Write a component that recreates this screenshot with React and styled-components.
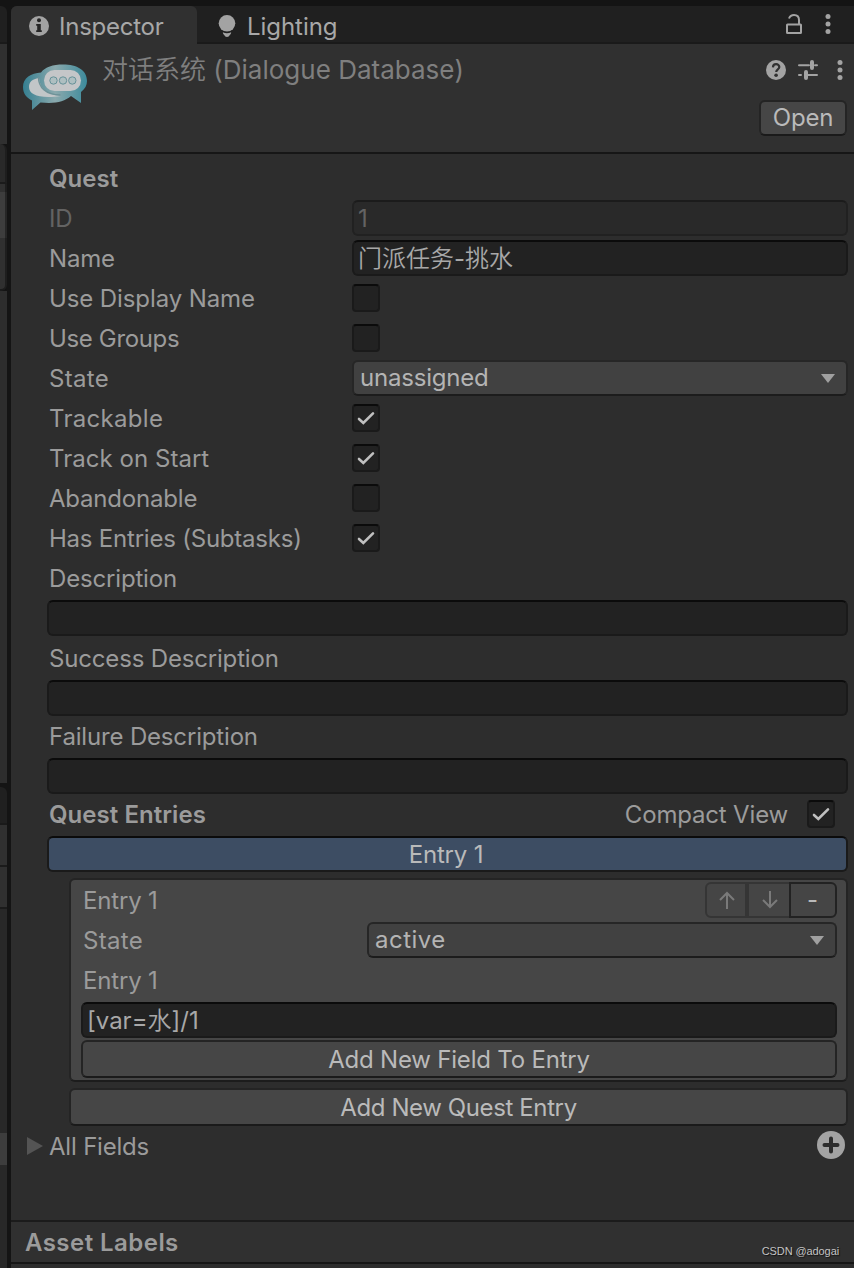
import React from "react";
import styled, { createGlobalStyle, css } from "styled-components";

const GlobalStyle = createGlobalStyle`
  * {
    box-sizing: border-box;
  }
  body {
    margin: 0;
    background: #141414;
    color: #9b9b9b;
    font-family: Inter, "Noto Sans CJK SC", sans-serif;
    font-size: 24px;
    line-height: 36px;
    letter-spacing: -0.2px;
  }
  svg {
    display: block;
    flex: none;
  }
`;

const Window = styled.div`
  display: flex;
  gap: 4px;
  width: 854px;
  height: 1268px;
  padding-top: 6px;
  overflow: hidden;
  white-space: nowrap;
`;

/* Sliver of the neighbouring docked windows */
const Neighbour = styled.div`
  width: 7px;
  flex: none;
  display: flex;
  flex-direction: column;
`;

const Slice = styled.div`
  height: ${(p) => p.$h}px;
  flex: none;
  background: ${(p) => p.$bg};
  ${(p) => p.$line && `border-bottom: 2px solid ${p.$line};`}
  ${(p) => p.$round && `border-radius: ${p.$round};`}
  ${(p) => p.$edge && `border-right: 2px solid ${p.$edge};`}
`;

const Inspector = styled.main`
  flex: 1;
  min-width: 0;
  display: flex;
  flex-direction: column;
  border-radius: 6px 0 0 0;
  background: #2d2d2d;
`;

const TabBar = styled.nav`
  display: flex;
  height: 38px;
  flex: none;
  border-radius: 6px 0 0 0;
  background: #202020;
  box-shadow: inset 0 -2px #1a1a1a;
`;

const Tab = styled.div`
  display: flex;
  align-items: center;
  height: 38px;
  color: #a8a8a8;
  padding: 2px 0 0 ${(p) => (p.$active ? 18 : 21)}px;
  gap: ${(p) => (p.$active ? 10 : 11)}px;
  letter-spacing: ${(p) => (p.$active ? -0.25 : -0.05)}px;
  ${(p) =>
    p.$active &&
    css`
      width: 186px;
      border-radius: 6px 6px 0 0;
      background: #303030;
    `}
`;

const TabLabel = styled.span`
  padding-top: 2px;
`;

const TabTools = styled.div`
  display: flex;
  align-items: center;
  gap: 22px;
  margin-left: auto;
  padding: 0 23px 2px 0;
`;

const Header = styled.header`
  display: flex;
  height: 110px;
  flex: none;
  padding: 8px 0 0 12px;
  background: #303030;
  border-bottom: 2px solid #161616;
`;

const Logo = styled.div`
  padding-top: 12px;
`;

const Title = styled.h1`
  margin: 0 0 0 13px;
  font-size: 26px;
  font-weight: 400;
  letter-spacing: 0;
  color: #7f7f7f;
`;

const Han = styled.span`
  font-weight: 350;
`;

const HeaderSide = styled.div`
  display: flex;
  flex-direction: column;
  align-items: flex-end;
  gap: 12px;
  margin-left: auto;
`;

const HeaderTools = styled.div`
  display: flex;
  align-items: center;
  gap: 12px;
  height: 36px;
  padding-right: 11px;

  > :last-child {
    margin-left: 7px;
  }
`;

const Button = styled.button`
  display: block;
  width: ${(p) => p.$w || "100%"};
  height: ${(p) => p.$h || 38}px;
  margin: ${(p) => p.$m || 0};
  padding: ${(p) => (p.$h ? 0 : "1px 0 0")};
  border: 2px solid #242424;
  border-bottom-color: #1a1a1a;
  border-radius: 6px;
  background: #464646;
  color: #bababa;
  font: inherit;
  line-height: 32px;
  letter-spacing: ${(p) => p.$track || -0.2}px;
`;

const Body = styled.section`
  height: 1066px;
  flex: none;
  padding: 6px 6px 0 36px;
`;

const Row = styled.div`
  display: flex;
  align-items: center;
  height: 36px;
  margin-bottom: ${(p) => (p.$gap === undefined ? 4 : p.$gap)}px;
`;

const Label = styled.label`
  width: ${(p) => p.$w || 305}px;
  flex: none;
  padding-left: 2px;
  padding-top: 1px;
  color: ${(p) => (p.$dim ? "#636363" : "inherit")};
  letter-spacing: ${(p) => (p.$track === undefined ? -0.17 : p.$track)}px;
`;

const Strong = styled.h2`
  margin: 0;
  padding: 1px 0 0 2px;
  font-size: 24px;
  font-weight: 600;
  letter-spacing: ${(p) => p.$track || 0.05}px;
`;

const Field = styled.div`
  flex: 1;
  height: 36px;
  padding: 0 4px;
  line-height: 34px;
  letter-spacing: 0;
  border: 2px solid ${(p) => (p.$dim ? "#212121" : "#1a1a1a")};
  border-top-color: ${(p) => (p.$dim ? "#1b1b1b" : "#0b0b0b")};
  border-radius: 6px;
  background: ${(p) => (p.$dim ? "#292929" : "#222222")};
  color: ${(p) => (p.$dim ? "#636363" : "#a8a8a8")};
`;

const Dropdown = styled.div`
  flex: 1;
  display: flex;
  align-items: center;
  justify-content: space-between;
  height: 36px;
  padding: 0 11px 0 6px;
  border: 2px solid #262626;
  border-bottom-color: #1c1c1c;
  border-radius: 6px;
  background: #414141;
  color: #b4b4b4;
  line-height: 32px;
  letter-spacing: ${(p) => p.$track}px;
`;

const Box = styled.span`
  display: flex;
  align-items: center;
  justify-content: center;
  width: 28px;
  height: 28px;
  border: 2px solid #1a1a1a;
  border-top-color: #0b0b0b;
  border-radius: 4px;
  background: #222222;
`;

const Compact = styled.div`
  display: flex;
  align-items: center;
  margin-left: auto;
  padding-right: 13px;

  ${Label} {
    width: auto;
    padding-right: 19px;
  }
`;

const EntryTab = styled.div`
  height: 36px;
  padding-right: 3px;
  border: 2px solid #1a1a1a;
  border-top-color: #0b0b0b;
  border-radius: 6px;
  background: #3d4d63;
  color: #bababa;
  line-height: 34px;
  text-align: center;
`;

const EntryPanel = styled.div`
  height: 204px;
  margin: 6px 0 6px 22px;
  padding: 2px 9px 0 10px;
  border: 2px solid #242424;
  border-bottom-color: #1c1c1c;
  border-radius: 6px;
  background: #464646;
`;

const MoveGroup = styled.div`
  display: flex;
  margin-left: auto;
  height: 36px;
`;

const MoveButton = styled.button`
  display: flex;
  align-items: center;
  justify-content: center;
  width: ${(p) => p.$w}px;
  height: 36px;
  padding: 0 0 0 2px;
  border: 2px solid #353535;
  border-right-width: ${(p) => (p.$first ? 2 : 0)}px;
  border-radius: ${(p) => (p.$first ? "6px 0 0 6px" : "0")};
  background: #454545;
  color: #7a7a7a;
  font: inherit;
  ${(p) =>
    p.$last &&
    css`
      padding: 0 1px 0 0;
      border: 2px solid #222222;
      border-radius: 0 6px 6px 0;
      color: #bababa;
    `}
`;

const Foldout = styled.div`
  display: flex;
  align-items: center;
  height: 40px;
  margin: -1px 0 0 -20px;
  padding-right: 3px;

  > :last-child {
    margin-left: auto;
  }
`;

const FoldoutLabel = styled.span`
  padding: 3px 0 0 6px;
`;

const Footer = styled.footer`
  height: 44px;
  flex: none;
  display: flex;
  align-items: center;
  justify-content: space-between;
  padding: 0 15px 0 12px;
  background: #303030;
  border-top: 2px solid #1b1b1b;
  border-bottom: 2px solid #161616;
`;

const Watermark = styled.small`
  padding-top: 17px;
  font: 11px/16px "Liberation Sans", sans-serif;
  letter-spacing: -0.1px;
  color: #c4c4c4;
  text-shadow: 1px 1px 1px #111;
`;

const InfoIcon = () => (
  <svg width="20" height="20" viewBox="0 0 20 20">
    <circle cx="10" cy="10" r="10" fill="#a3a3a3" />
    <circle cx="10" cy="4.3" r="2" fill="#262626" />
    <path d="M7.2 8h4.6v6.2h1V16H7.2v-1.8h1V9.8h-1z" fill="#262626" />
  </svg>
);

const BulbIcon = () => (
  <svg width="18" height="24" viewBox="0 0 18 24">
    <circle cx="9" cy="9.3" r="8.3" fill="#a3a3a3" />
    <path
      d="M4.8 18.3Q9 20 13.2 18.3Q13 20.6 11.8 21Q11 23 9 23Q7 23 6.2 21Q5 20.6 4.8 18.3Z"
      fill="#a3a3a3"
    />
  </svg>
);

const LockIcon = () => (
  <svg width="18" height="22" viewBox="0 0 18 22" fill="none" stroke="#a3a3a3" strokeWidth="2">
    <rect x="2" y="11.5" width="14" height="8.5" rx="0.5" />
    <path d="M4 5.5C5 3 6.5 2 9 2c3 0 5 2 5 5v4.5" />
  </svg>
);

const DotsIcon = () => (
  <svg width="6" height="20" viewBox="0 0 6 20" fill="#a3a3a3">
    <circle cx="3" cy="2.5" r="2.5" />
    <circle cx="3" cy="10" r="2.5" />
    <circle cx="3" cy="17.5" r="2.5" />
  </svg>
);

const HelpIcon = () => (
  <svg width="20" height="20" viewBox="0 0 20 20">
    <circle cx="10" cy="10" r="10" fill="#a3a3a3" />
    <path
      d="M6.9 7.4C7 5 8.4 4.2 10.1 4.2c1.9 0 3.2 1.1 3.2 2.8 0 2.3-3.1 2.3-3.1 5"
      fill="none"
      stroke="#303030"
      strokeWidth="2.2"
    />
    <circle cx="10.1" cy="15.3" r="1.8" fill="#303030" />
  </svg>
);

const PresetIcon = () => (
  <svg width="20" height="20" viewBox="0 0 20 20" stroke="#a3a3a3" strokeLinecap="round">
    <path d="M1 5.2h10M17 5.2h2M1 15h2M9 15h10" strokeWidth="2" />
    <path d="M14 2v6M8 12v6" strokeWidth="4" />
  </svg>
);

const BubbleIcon = () => (
  <svg width="66" height="50" viewBox="0 0 66 50">
    <defs>
      <linearGradient id="bubble" x1="0" y1="0" x2="1" y2="0">
        <stop offset="0" stopColor="#357f91" />
        <stop offset="0.5" stopColor="#8aa9ad" />
        <stop offset="1" stopColor="#3d8b9c" />
      </linearGradient>
    </defs>
    <path
      d="M18 8.5C8 9 0 14 0 23c0 7 4 11 9 13.500V46l8.500-7.500C32 40 41 38 48 32l10 7V28c4-3 6-7 6-11C64 6 54 0.500 40 0.500 30 0.500 22 3 18 8.500z"
      fill="url(#bubble)"
    />
    <path d="M16 14C9 15 6 18 6 23c0 8 11 12 32 9-12-1-21-6-22-18z" fill="#c2c6c8" />
    <path d="M15.5 13c0 10 7 18 22 18" fill="none" stroke="#6f9298" strokeWidth="1.5" />
    <rect x="21" y="6" width="37" height="21" rx="10.5" fill="#c4c6c8" />
    <g fill="#aebfc1" stroke="#679299" strokeWidth="1">
      <circle cx="30.5" cy="16.5" r="3.7" />
      <circle cx="40" cy="16.5" r="3.7" />
      <circle cx="49.3" cy="16.5" r="3.7" />
    </g>
  </svg>
);

const ArrowIcon = ({ down }) => (
  <svg width="18" height="20" viewBox="0 0 18 20" fill="none" stroke="currentColor" strokeWidth="2">
    {down ? <path d="M9 1v16M2 10l7 7 7-7" /> : <path d="M9 19V3M2 10l7-7 7 7" />}
  </svg>
);

const Caret = () => (
  <svg width="14" height="9" viewBox="0 0 14 9">
    <path d="M0 0h14L7 9z" fill="#a0a0a0" />
  </svg>
);

const Checkbox = ({ checked }) => (
  <Box>
    {checked && (
      <svg width="20" height="20" viewBox="0 0 20 20">
        <path
          d="M3 11l4.3 4L17 5.3"
          fill="none"
          stroke="#c0c0c0"
          strokeWidth="2.6"
          strokeLinecap="round"
        />
      </svg>
    )}
  </Box>
);

const Toggle = ({ label, checked, track }) => (
  <Row>
    <Label $track={track}>{label}</Label>
    <Checkbox checked={checked} />
  </Row>
);

const TextArea = ({ label, gap }) => (
  <>
    <Row>
      <Label>{label}</Label>
    </Row>
    <Row $gap={gap}>
      <Field />
    </Row>
  </>
);

export default function App() {
  return (
    <Window>
      <GlobalStyle />
      <Neighbour>
        <Slice $h={38} $bg="#202020" $line="#1a1a1a" $round="0 6px 0 0" />
        <Slice $h={100} $bg="#303030" />
        <Slice $h={40} $bg="#292929" $line="#1b1b1b" $edge="#1e1e1e" $round="0 6px 0 0" />
        <Slice $h={8} $bg="#303030" $edge="#1e1e1e" />
        <Slice $h={46} $bg="#3d3d3d" $edge="#262626" />
        <Slice $h={53} $bg="#303030" $line="#1b1b1b" $edge="#1e1e1e" $round="0 0 6px 0" />
        <Slice $h={492} $bg="#2d2d2d" />
        <Slice $h={4} $bg="#141414" />
        <Slice $h={38} $bg="#202020" $line="#1a1a1a" $round="0 6px 0 0" />
        <Slice $h={42} $bg="#303030" $line="#1b1b1b" />
        <Slice $h={42} $bg="#303030" $line="#1b1b1b" />
        <Slice $h={224} $bg="#282828" />
        <Slice $h={32} $bg="#3d3d3d" />
        <Slice $h={103} $bg="#282828" />
      </Neighbour>

      <Inspector>
        <TabBar>
          <Tab $active>
            <InfoIcon />
            <TabLabel>Inspector</TabLabel>
          </Tab>
          <Tab>
            <BulbIcon />
            <TabLabel>Lighting</TabLabel>
          </Tab>
          <TabTools>
            <LockIcon />
            <DotsIcon />
          </TabTools>
        </TabBar>

        <Header>
          <Logo>
            <BubbleIcon />
          </Logo>
          <Title>
            <Han>对话系统</Han> (Dialogue Database)
          </Title>
          <HeaderSide>
            <HeaderTools>
              <HelpIcon />
              <PresetIcon />
              <DotsIcon />
            </HeaderTools>
            <Button $w="88px" $h={36} $m="0 7px 0 0">
              Open
            </Button>
          </HeaderSide>
        </Header>

        <Body>
          <Row>
            <Strong>Quest</Strong>
          </Row>
          <Row>
            <Label $dim>ID</Label>
            <Field $dim>1</Field>
          </Row>
          <Row>
            <Label>Name</Label>
            <Field>
              <Han>门派任务</Han>-<Han>挑水</Han>
            </Field>
          </Row>
          <Toggle label="Use Display Name" track={-0.1} />
          <Toggle label="Use Groups" track={-0.35} />
          <Row>
            <Label $track={0.3}>State</Label>
            <Dropdown $track={-0.2}>
              unassigned
              <Caret />
            </Dropdown>
          </Row>
          <Toggle label="Trackable" track={0.3} checked />
          <Toggle label="Track on Start" track={0.04} checked />
          <Toggle label="Abandonable" track={-0.2} />
          <Toggle label="Has Entries (Subtasks)" track={-0.22} checked />
          <TextArea label="Description" />
          <TextArea label="Success Description" gap={2} />
          <TextArea label="Failure Description" gap={2} />
          <Row>
            <Strong>Quest Entries</Strong>
            <Compact>
              <Label>Compact View</Label>
              <Checkbox checked />
            </Compact>
          </Row>
          <EntryTab>Entry 1</EntryTab>

          <EntryPanel>
            <Row>
              <Label>Entry 1</Label>
              <MoveGroup>
                <MoveButton $w={42} $first>
                  <ArrowIcon />
                </MoveButton>
                <MoveButton $w={42}>
                  <ArrowIcon down />
                </MoveButton>
                <MoveButton $w={48} $last>
                  -
                </MoveButton>
              </MoveGroup>
            </Row>
            <Row>
              <Label $w={286} $track={0.3}>
                State
              </Label>
              <Dropdown $track={0.5}>
                active
                <Caret />
              </Dropdown>
            </Row>
            <Row>
              <Label>Entry 1</Label>
            </Row>
            <Row $gap={2}>
              <Field>
                [var=<Han>水</Han>]/1
              </Field>
            </Row>
            <Button>Add New Field To Entry</Button>
          </EntryPanel>

          <Button $w="779px" $m="0 0 0 22px" $track={-0.39}>
            Add New Quest Entry
          </Button>
          <Foldout>
            <svg width="16" height="20" viewBox="0 0 16 20">
              <path d="M0 2l16 9-16 9z" fill="#545454" />
            </svg>
            <FoldoutLabel>All Fields</FoldoutLabel>
            <svg width="28" height="28" viewBox="0 0 28 28">
              <circle cx="14" cy="14" r="14" fill="#a3a3a3" />
              <path d="M14 7.5v13M7.5 14h13" stroke="#2d2d2d" strokeWidth="4" strokeLinecap="round" />
            </svg>
          </Foldout>
        </Body>

        <Footer>
          <Strong $track={0.45}>Asset Labels</Strong>
          <Watermark>CSDN @adogai</Watermark>
        </Footer>
      </Inspector>
    </Window>
  );
}
